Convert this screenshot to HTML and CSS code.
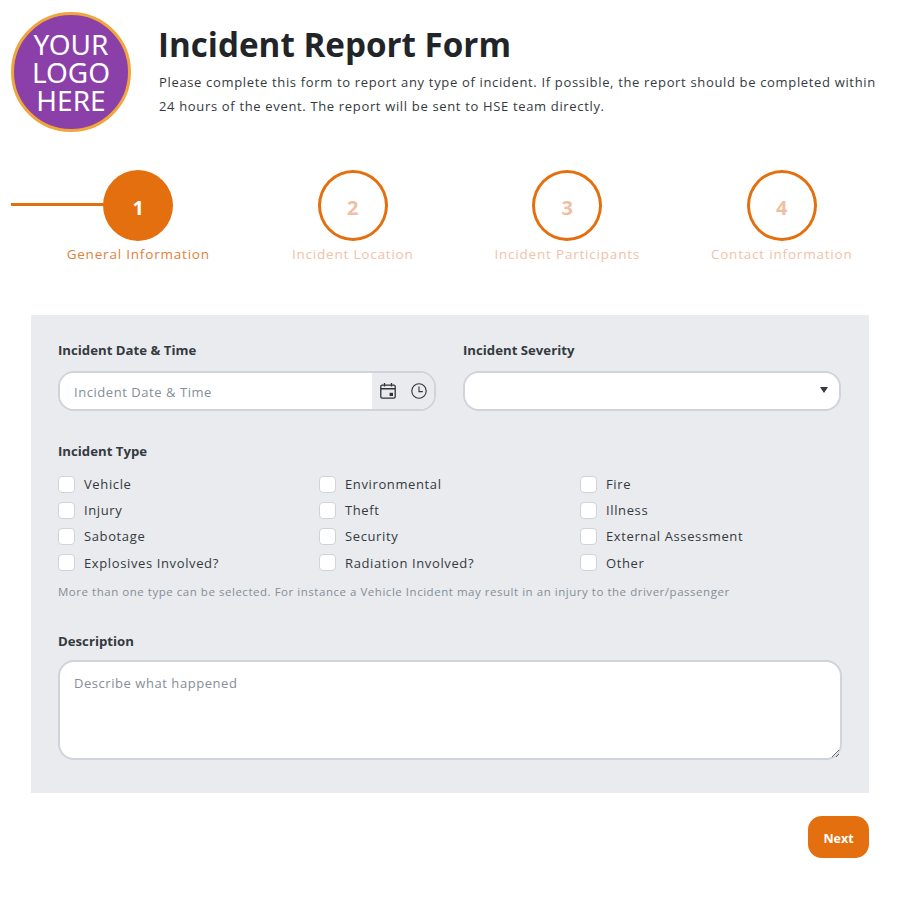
FILE: index.html
```html
<!DOCTYPE html>
<html lang="en">
<head>
  <meta charset="UTF-8">
  <title>Incident Report Form</title>
  <link rel="stylesheet" href="styles.css">
</head>
<body>

<header class="page-head">
  <div class="logo">YOUR<br>LOGO<br>HERE</div>
  <div class="head-text">
    <h1>Incident Report Form</h1>
    <p>Please complete this form to report any type of incident. If possible, the report should be completed within 24 hours of the event. The report will be sent to HSE team directly.</p>
  </div>
</header>

<div class="steps">
  <div class="step active">
    <div class="step-num">1</div>
    <div class="step-label">General Information</div>
  </div>
  <div class="step">
    <div class="step-num">2</div>
    <div class="step-label">Incident Location</div>
  </div>
  <div class="step">
    <div class="step-num">3</div>
    <div class="step-label">Incident Participants</div>
  </div>
  <div class="step">
    <div class="step-num">4</div>
    <div class="step-label">Contact information</div>
  </div>
</div>

<form class="panel">
  <div class="row">
    <div class="field">
      <label class="field-label">Incident Date &amp; Time</label>
      <div class="date-box">
        <input type="text" placeholder="Incident Date &amp; Time">
        <div class="date-icons">
          <svg width="16" height="16" viewBox="0 0 16 16" fill="none" stroke="#2f343a" stroke-width="1.3">
            <rect x=".8" y="2.2" width="14.4" height="13" rx="1.4"/>
            <path d="M.8 5.8h14.4" stroke-width="1.6"/>
            <path d="M4.5 0v3.4M11.5 0v3.4"/>
            <rect x="9.6" y="9.8" width="3.4" height="3.2" fill="#2f343a" stroke="none"/>
          </svg>
          <svg width="16" height="16" viewBox="0 0 16 16" fill="none" stroke="#2f343a" stroke-width="1.1">
            <circle cx="8" cy="8" r="7.2"/>
            <path d="M8 3.6V8.6H11.8"/>
          </svg>
        </div>
      </div>
    </div>
    <div class="field">
      <label class="field-label">Incident Severity</label>
      <div class="select-box">
        <select>
          <option></option>
          <option>Low</option>
          <option>Medium</option>
          <option>High</option>
        </select>
      </div>
    </div>
  </div>

  <div class="type-group">
    <label class="field-label">Incident Type</label>
    <div class="checks">
      <label class="check"><input type="checkbox"> Vehicle</label>
      <label class="check"><input type="checkbox"> Environmental</label>
      <label class="check"><input type="checkbox"> Fire</label>
      <label class="check"><input type="checkbox"> Injury</label>
      <label class="check"><input type="checkbox"> Theft</label>
      <label class="check"><input type="checkbox"> Illness</label>
      <label class="check"><input type="checkbox"> Sabotage</label>
      <label class="check"><input type="checkbox"> Security</label>
      <label class="check"><input type="checkbox"> External Assessment</label>
      <label class="check"><input type="checkbox"> Explosives Involved?</label>
      <label class="check"><input type="checkbox"> Radiation Involved?</label>
      <label class="check"><input type="checkbox"> Other</label>
    </div>
    <p class="hint">More than one type can be selected. For instance a Vehicle Incident may result in an injury to the driver/passenger</p>
  </div>

  <div class="desc-group">
    <label class="field-label">Description</label>
    <textarea placeholder="Describe what happened"></textarea>
  </div>
</form>

<div class="actions">
  <button type="button" class="btn-next">Next</button>
</div>

</body>
</html>
```

FILE: styles.css
```css
* {
  box-sizing: border-box;
}
body {
  margin: 0;
  padding: 12px 31px 0 11px;
  background: #fff;
  font-family: "Open Sans", Arial, sans-serif;
  color: #343a40;
}
.page-head {
  display: flex;
  gap: 28px;
  margin-right: -20px;
}
.logo {
  flex: none;
  width: 120px;
  height: 120px;
  border-radius: 50%;
  background: #8b3fa8;
  border: 3px solid #f0a63a;
  color: #fff;
  font-family: "Noto Sans", Arial, sans-serif;
  font-size: 28px;
  font-weight: 400;
  line-height: 28px;
  text-align: center;
  padding-top: 15px;
}
.head-text h1 {
  margin: 11px 0 0 -1px;
  font-size: 33.2px;
  line-height: 44px;
  font-weight: 700;
  color: #212529;
}
.head-text p {
  margin: 3px 0 0;
  font-size: 13px;
  line-height: 24px;
  letter-spacing: .66px;
  color: #343a40;
}
.steps {
  display: grid;
  grid-template-columns: repeat(4, 1fr);
  margin: 38px -20px 0 20px;
}
.step {
  position: relative;
  display: flex;
  flex-direction: column;
  align-items: center;
}
.step.active::before {
  content: "";
  position: absolute;
  left: -20px;
  right: 50%;
  top: 33px;
  height: 3px;
  background: #e46f0e;
}
.step-num {
  position: relative;
  width: 70px;
  height: 71px;
  border-radius: 50%;
  border: 3px solid #e46f0e;
  background: #fff;
  color: #f0bfa3;
  font-size: 20px;
  font-weight: 700;
  line-height: 69px;
  text-align: center;
}
.step.active .step-num {
  background: #e46f0e;
  color: #fff;
}
.step-label {
  margin-top: 1px;
  font-size: 13.5px;
  line-height: 24px;
  letter-spacing: .8px;
  color: #f0c2a9;
}
.step.active .step-label {
  color: #e0813c;
}
.panel {
  margin: 49px 0 0 20px;
  height: 478px;
  padding: 27px;
  background: #e9ebef;
}
.row {
  display: grid;
  grid-template-columns: 378px 378px;
  gap: 27px;
}
.field-label {
  display: block;
  font-size: 13.2px;
  line-height: 16px;
  font-weight: 700;
  color: #343a40;
}
.date-box,
.select-box {
  margin-top: 13px;
  height: 40px;
  border: 2px solid #ced4da;
  border-radius: 16px;
  background: #fff;
  overflow: hidden;
}
.date-box {
  display: flex;
}
.date-box input,
.select-box select,
textarea {
  border: none;
  outline: none;
  background: #fff;
  font-family: inherit;
  font-size: 13px;
  letter-spacing: .55px;
  color: #343a40;
}
.date-box input {
  flex: 1;
  min-width: 0;
  padding: 2px 14px 0;
}
input::placeholder,
textarea::placeholder {
  color: #868e96;
  opacity: 1;
}
.date-icons {
  flex: none;
  display: flex;
  align-items: center;
  gap: 15px;
  padding: 0 7px 0 8px;
  background: #e9ebef;
}
.select-box select {
  width: 100%;
  height: 100%;
  padding: 0 14px;
  appearance: none;
  background: #fff;
}
.select-box {
  position: relative;
}
.select-box::after {
  content: "";
  position: absolute;
  right: 11px;
  top: 14px;
  border-left: 4px solid transparent;
  border-right: 4px solid transparent;
  border-top: 6px solid #343a40;
  pointer-events: none;
}
.type-group {
  margin-top: 32px;
}
.checks {
  display: grid;
  grid-template-columns: repeat(3, 261px);
  grid-auto-rows: 26.2px;
  margin-top: 12px;
}
.check {
  display: flex;
  align-items: center;
  gap: 9px;
  font-size: 13px;
  letter-spacing: .62px;
  color: #343a40;
}
.check input {
  appearance: none;
  width: 17px;
  height: 17px;
  margin: 0;
  border: 1px solid #ced4da;
  border-radius: 4px;
  background: #fff;
}
.hint {
  margin: 7px 0 0;
  font-size: 11.5px;
  line-height: 18px;
  letter-spacing: .53px;
  color: #868e96;
}
.desc-group {
  margin-top: 32px;
}
textarea {
  display: block;
  width: 100%;
  height: 100px;
  margin-top: 11px;
  padding: 12px 14px;
  border: 2px solid #ced4da;
  border-radius: 16px;
  resize: vertical;
}
.actions {
  display: flex;
  justify-content: flex-end;
  margin-top: 23px;
}
.btn-next {
  width: 61px;
  height: 42px;
  padding: 2px 0 0;
  border: none;
  border-radius: 14px;
  background: #e46f0e;
  color: #fff;
  font-family: inherit;
  font-size: 12.5px;
  font-weight: 700;
}
```
